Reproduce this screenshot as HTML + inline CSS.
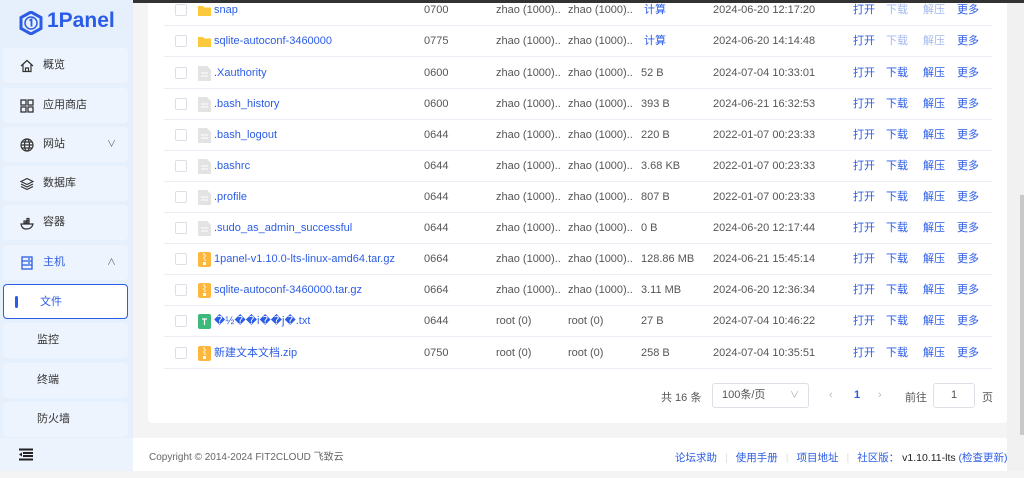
<!DOCTYPE html>
<html><head><meta charset="utf-8"><style>
*{box-sizing:border-box;margin:0;padding:0}
body{width:1024px;height:471px;overflow:hidden;position:relative;background:#f4f4f5;font-family:"Liberation Sans","Noto Sans CJK SC",sans-serif;font-size:11px;color:#555}
.side{position:absolute;left:0;top:0;width:133px;height:471px;background:#e6effc}
.side .bot{position:absolute;left:0;top:438px;width:133px;height:33px;background:#edf3fd}
.it{position:absolute;left:3px;width:125px;height:35px;background:#eef4fd;border-radius:4px;color:#333;font-size:11px;line-height:35px}
.it .ic{position:absolute;left:17px;top:11px;width:14px;height:14px}
.it .tx{position:absolute;left:40px}
.it .ar{position:absolute;left:104px;color:#666;font-size:9px}
.sub .tx{left:34px}
.sel{background:#fff;border:1.5px solid #2b5ce6;color:#2b5ce6}
.sel .bar{position:absolute;left:11px;top:11px;width:3px;height:12px;background:#2b5ce6;border-radius:2px}
.topline{position:absolute;left:133px;top:0;width:891px;height:3px;background:#333;z-index:5}
.card{position:absolute;left:148px;top:0;width:859px;height:423px;background:#fff;border-radius:0 0 4px 4px}
.row{position:absolute;left:164px;width:828px;height:31px;border-bottom:1px solid #ebeef5;line-height:31px;white-space:nowrap}
.row span{position:absolute}
.cb{position:absolute;left:11px;top:9px;width:12px;height:12px;border:1px solid #dcdfe6;border-radius:2px;background:#fff}
.nm{left:50px;color:#2b5ce6}
.fi{position:absolute;left:34px;top:8px;width:13px;height:15px}
.p{left:260px}.u{left:332px}.g{left:404px}.s{left:477px}.d{left:549px}
.a1{left:689px;color:#2b5ce6}.a2{left:722px;color:#2b5ce6}.a3{left:759px;color:#2b5ce6}.a4{left:793px;color:#2b5ce6}
.dis{color:#a3b8ef!important}
.blue{color:#2b5ce6}
.foot{position:absolute;left:133px;top:438px;width:891px;height:33px;background:#fff;line-height:40px}
.scroll{position:absolute;left:1007px;top:3px;width:17px;height:468px;background:#f1f1f1}
.thumb{position:absolute;left:1020px;top:195px;width:4px;height:240px;background:#c8c8c8}
</style></head><body>
<div class="side">
 <svg style="position:absolute;left:19px;top:11px" width="24" height="24" viewBox="0 0 24 24"><path d="M12 1L22 6.5V17.5L12 23L2 17.5V6.5Z" fill="none" stroke="#2b5ce6" stroke-width="3"/><circle cx="12" cy="12" r="6" fill="none" stroke="#2b5ce6" stroke-width="1.5"/><path d="M10.5 9.5L12.5 8.5V15.5" stroke="#2b5ce6" stroke-width="1.8" fill="none"/></svg>
 <div style="position:absolute;left:47px;top:9px;font-size:21px;font-weight:bold;color:#2b5ce6">1Panel</div>
 <div class="it" style="top:48px"><svg class="ic" viewBox="0 0 14 14"><path d="M1 7L7 1.5L13 7M3 5.5V12.5H11V5.5M5.5 12.5V9H8.5V12.5" fill="none" stroke="#333" stroke-width="1.2"/></svg><span class="tx">概览</span></div>
 <div class="it" style="top:88px"><svg class="ic" viewBox="0 0 14 14"><g fill="none" stroke="#333" stroke-width="1.3"><rect x="1" y="1" width="5" height="5"/><rect x="8" y="1" width="5" height="5"/><rect x="1" y="8" width="5" height="5"/><rect x="8" y="8" width="5" height="5"/></g></svg><span class="tx">应用商店</span></div>
 <div class="it" style="top:127px"><svg class="ic" viewBox="0 0 14 14"><g fill="none" stroke="#333" stroke-width="1.2"><circle cx="7" cy="7" r="6"/><ellipse cx="7" cy="7" rx="2.5" ry="6"/><path d="M1 7H13M2 4H12M2 10H12"/></g></svg><span class="tx">网站</span><span class="ar">∨</span></div>
 <div class="it" style="top:166px"><svg class="ic" viewBox="0 0 14 14"><g fill="none" stroke="#333" stroke-width="1.2"><path d="M7 1.5L13 4.5L7 7.5L1 4.5Z"/><path d="M1 7L7 10L13 7M1 9.5L7 12.5L13 9.5"/></g></svg><span class="tx">数据库</span></div>
 <div class="it" style="top:205px"><svg class="ic" viewBox="0 0 14 14"><g fill="none" stroke="#333" stroke-width="1.2"><path d="M1 8H13C12 12 9 13 6 13C3 13 1.5 11 1 8Z"/><rect x="4" y="5" width="2" height="2"/><rect x="7" y="5" width="2" height="2"/><rect x="7" y="2.5" width="2" height="2"/></g></svg><span class="tx">容器</span></div>
 <div class="it" style="top:245px;color:#2b5ce6"><svg class="ic" viewBox="0 0 14 14"><g fill="none" stroke="#2b5ce6" stroke-width="1.3"><rect x="2" y="1" width="10" height="12"/><path d="M2 5H12M2 9H12M8 3H10M8 7H10"/></g></svg><span class="tx">主机</span><span class="ar">∧</span></div>
 <div class="it sel sub" style="top:284px"><div class="bar"></div><span class="tx" style="left:36px">文件</span></div>
 <div class="it sub" style="top:323px"><span class="tx">监控</span></div>
 <div class="it sub" style="top:363px"><span class="tx">终端</span></div>
 <div class="it sub" style="top:402px"><span class="tx">防火墙</span></div>
 <div class="bot"><svg style="position:absolute;left:18px;top:10px" width="16" height="13" viewBox="0 0 16 13"><path d="M1 1.5H15M5 5H15M5 8H15M1 11.5H15" stroke="#222" stroke-width="2"/><path d="M1 6.5L4 4.5V8.5Z" fill="#222"/></svg></div>
</div>
<div class="card"></div>
<div class="topline"></div>
<div class="row" style="top:-5px"><div class="cb"></div><svg class="fi" viewBox="0 0 13 15"><path d="M0 3H5L6.5 4.5H13V13H0Z" fill="#fcc93c"/></svg><span class="nm">snap</span><span class="p">0700</span><span class="u">zhao (1000)..</span><span class="g">zhao (1000)..</span><span class="s blue" style="left:480px">计算</span><span class="d">2024-06-20 12:17:20</span><span class="a1">打开</span><span class="a2 dis">下载</span><span class="a3 dis">解压</span><span class="a4">更多</span></div>
<div class="row" style="top:26px"><div class="cb"></div><svg class="fi" viewBox="0 0 13 15"><path d="M0 3H5L6.5 4.5H13V13H0Z" fill="#fcc93c"/></svg><span class="nm">sqlite-autoconf-3460000</span><span class="p">0775</span><span class="u">zhao (1000)..</span><span class="g">zhao (1000)..</span><span class="s blue" style="left:480px">计算</span><span class="d">2024-06-20 14:14:48</span><span class="a1">打开</span><span class="a2 dis">下载</span><span class="a3 dis">解压</span><span class="a4">更多</span></div>
<div class="row" style="top:58px"><div class="cb"></div><svg class="fi" viewBox="0 0 13 15"><path d="M0 0H9L13 4V15H0Z" fill="#e3e3e3"/><path d="M3 7H10M3 10H10" stroke="#fff"/></svg><span class="nm">.Xauthority</span><span class="p">0600</span><span class="u">zhao (1000)..</span><span class="g">zhao (1000)..</span><span class="s">52 B</span><span class="d">2024-07-04 10:33:01</span><span class="a1">打开</span><span class="a2">下载</span><span class="a3">解压</span><span class="a4">更多</span></div>
<div class="row" style="top:89px"><div class="cb"></div><svg class="fi" viewBox="0 0 13 15"><path d="M0 0H9L13 4V15H0Z" fill="#e3e3e3"/><path d="M3 7H10M3 10H10" stroke="#fff"/></svg><span class="nm">.bash_history</span><span class="p">0600</span><span class="u">zhao (1000)..</span><span class="g">zhao (1000)..</span><span class="s">393 B</span><span class="d">2024-06-21 16:32:53</span><span class="a1">打开</span><span class="a2">下载</span><span class="a3">解压</span><span class="a4">更多</span></div>
<div class="row" style="top:120px"><div class="cb"></div><svg class="fi" viewBox="0 0 13 15"><path d="M0 0H9L13 4V15H0Z" fill="#e3e3e3"/><path d="M3 7H10M3 10H10" stroke="#fff"/></svg><span class="nm">.bash_logout</span><span class="p">0644</span><span class="u">zhao (1000)..</span><span class="g">zhao (1000)..</span><span class="s">220 B</span><span class="d">2022-01-07 00:23:33</span><span class="a1">打开</span><span class="a2">下载</span><span class="a3">解压</span><span class="a4">更多</span></div>
<div class="row" style="top:151px"><div class="cb"></div><svg class="fi" viewBox="0 0 13 15"><path d="M0 0H9L13 4V15H0Z" fill="#e3e3e3"/><path d="M3 7H10M3 10H10" stroke="#fff"/></svg><span class="nm">.bashrc</span><span class="p">0644</span><span class="u">zhao (1000)..</span><span class="g">zhao (1000)..</span><span class="s">3.68 KB</span><span class="d">2022-01-07 00:23:33</span><span class="a1">打开</span><span class="a2">下载</span><span class="a3">解压</span><span class="a4">更多</span></div>
<div class="row" style="top:182px"><div class="cb"></div><svg class="fi" viewBox="0 0 13 15"><path d="M0 0H9L13 4V15H0Z" fill="#e3e3e3"/><path d="M3 7H10M3 10H10" stroke="#fff"/></svg><span class="nm">.profile</span><span class="p">0644</span><span class="u">zhao (1000)..</span><span class="g">zhao (1000)..</span><span class="s">807 B</span><span class="d">2022-01-07 00:23:33</span><span class="a1">打开</span><span class="a2">下载</span><span class="a3">解压</span><span class="a4">更多</span></div>
<div class="row" style="top:213px"><div class="cb"></div><svg class="fi" viewBox="0 0 13 15"><path d="M0 0H9L13 4V15H0Z" fill="#e3e3e3"/><path d="M3 7H10M3 10H10" stroke="#fff"/></svg><span class="nm">.sudo_as_admin_successful</span><span class="p">0644</span><span class="u">zhao (1000)..</span><span class="g">zhao (1000)..</span><span class="s">0 B</span><span class="d">2024-06-20 12:17:44</span><span class="a1">打开</span><span class="a2">下载</span><span class="a3">解压</span><span class="a4">更多</span></div>
<div class="row" style="top:244px"><div class="cb"></div><svg class="fi" viewBox="0 0 13 15"><rect width="13" height="15" rx="2" fill="#fdb73d"/><path d="M5 2H7M6 4H8M5 6H7M6 8H8" stroke="#fff"/><rect x="5" y="10" width="3" height="3" fill="#fff"/></svg><span class="nm">1panel-v1.10.0-lts-linux-amd64.tar.gz</span><span class="p">0664</span><span class="u">zhao (1000)..</span><span class="g">zhao (1000)..</span><span class="s">128.86 MB</span><span class="d">2024-06-21 15:45:14</span><span class="a1">打开</span><span class="a2">下载</span><span class="a3">解压</span><span class="a4">更多</span></div>
<div class="row" style="top:275px"><div class="cb"></div><svg class="fi" viewBox="0 0 13 15"><rect width="13" height="15" rx="2" fill="#fdb73d"/><path d="M5 2H7M6 4H8M5 6H7M6 8H8" stroke="#fff"/><rect x="5" y="10" width="3" height="3" fill="#fff"/></svg><span class="nm">sqlite-autoconf-3460000.tar.gz</span><span class="p">0664</span><span class="u">zhao (1000)..</span><span class="g">zhao (1000)..</span><span class="s">3.11 MB</span><span class="d">2024-06-20 12:36:34</span><span class="a1">打开</span><span class="a2">下载</span><span class="a3">解压</span><span class="a4">更多</span></div>
<div class="row" style="top:306px"><div class="cb"></div><svg class="fi" viewBox="0 0 13 15"><rect width="13" height="15" rx="2" fill="#3dba7a"/><path d="M4 5H9M6.5 5V11" stroke="#fff" stroke-width="1.2"/></svg><span class="nm">�½��i��j�.txt</span><span class="p">0644</span><span class="u">root (0)</span><span class="g">root (0)</span><span class="s">27 B</span><span class="d">2024-07-04 10:46:22</span><span class="a1">打开</span><span class="a2">下载</span><span class="a3">解压</span><span class="a4">更多</span></div>
<div class="row" style="top:338px"><div class="cb"></div><svg class="fi" viewBox="0 0 13 15"><rect width="13" height="15" rx="2" fill="#fdb73d"/><path d="M5 2H7M6 4H8M5 6H7M6 8H8" stroke="#fff"/><rect x="5" y="10" width="3" height="3" fill="#fff"/></svg><span class="nm">新建文本文档.zip</span><span class="p">0750</span><span class="u">root (0)</span><span class="g">root (0)</span><span class="s">258 B</span><span class="d">2024-07-04 10:35:51</span><span class="a1">打开</span><span class="a2">下载</span><span class="a3">解压</span><span class="a4">更多</span></div>

<div style="position:absolute;left:661px;top:389px">共 16 条</div>
<div style="position:absolute;left:712px;top:383px;width:97px;height:25px;border:1px solid #dcdfe6;border-radius:3px;line-height:23px;padding-left:9px">100条/页<span style="position:absolute;right:9px;color:#aaa;font-size:9px">∨</span></div>
<div style="position:absolute;left:829px;top:389px;color:#bbb">‹</div>
<div style="position:absolute;left:854px;top:389px;color:#2b5ce6;font-weight:bold">1</div>
<div style="position:absolute;left:878px;top:389px;color:#bbb">›</div>
<div style="position:absolute;left:905px;top:389px">前往</div>
<div style="position:absolute;left:933px;top:383px;width:42px;height:25px;border:1px solid #dcdfe6;border-radius:3px;line-height:23px;text-align:center">1</div>
<div style="position:absolute;left:982px;top:389px">页</div>

<div class="foot"><span style="position:absolute;left:16px;color:#666;font-size:10px">Copyright © 2014-2024 FIT2CLOUD 飞致云</span>
<span style="position:absolute;left:542px;font-size:10.5px"><span class="blue">论坛求助</span><span style="color:#ddd;margin:0 8px">|</span><span class="blue">使用手册</span><span style="color:#ddd;margin:0 8px">|</span><span class="blue">项目地址</span><span style="color:#ddd;margin:0 8px">|</span><span class="blue">社区版：</span><span style="color:#222"> v1.10.11-lts </span><span class="blue">(检查更新)</span></span></div>
<div class="scroll"></div><div class="thumb"></div>
</body></html>
